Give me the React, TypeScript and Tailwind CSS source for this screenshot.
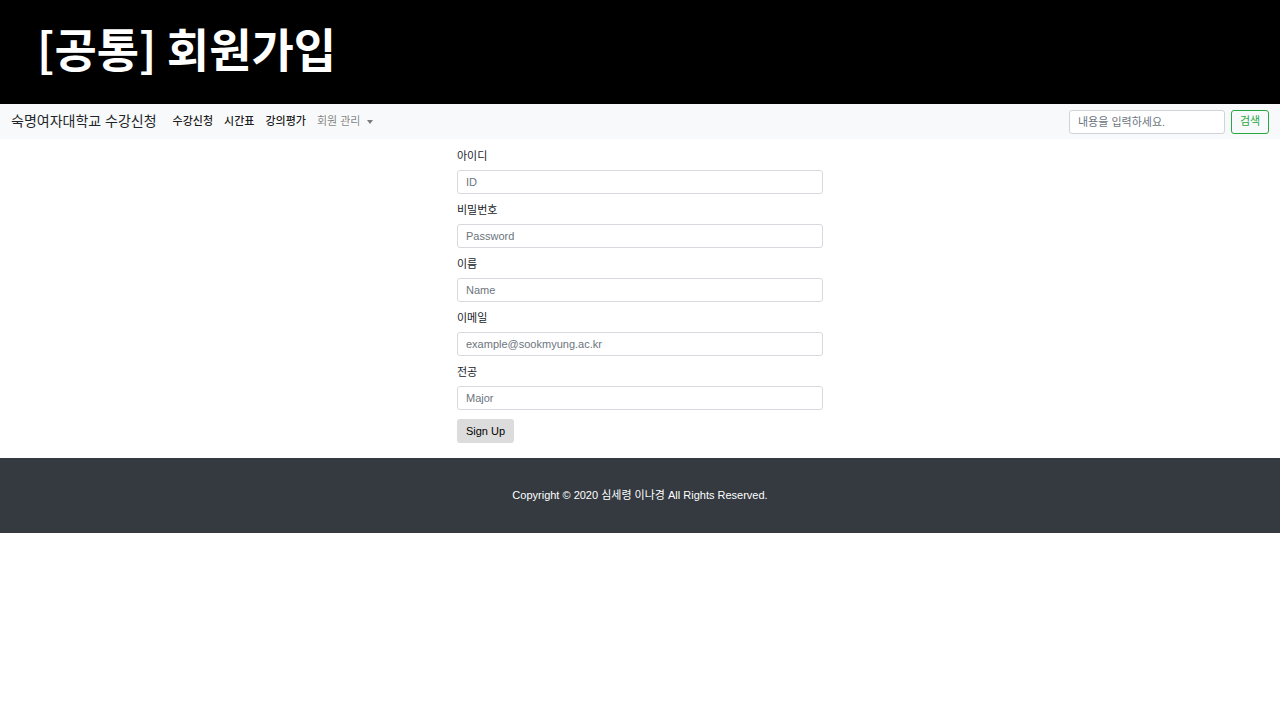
import React from "react";

const fields = [
  { label: "아이디", placeholder: "ID" },
  { label: "비밀번호", placeholder: "Password" },
  { label: "이름", placeholder: "Name" },
  { label: "이메일", placeholder: "example@sookmyung.ac.kr" },
  { label: "전공", placeholder: "Major" },
];

const font = "font-['Liberation_Sans','Noto_Sans_CJK_KR',sans-serif]";

export default function App() {
  return (
    <div className={`w-[1280px] h-[720px] bg-white ${font}`}>
      {/* Title banner */}
      <div className="h-[104px] bg-black flex items-center pl-[37px]">
        <h1 className="text-white text-[46px] font-bold leading-none font-['Noto_Sans_CJK_KR',sans-serif] -mt-[10px]">
          [공통] 회원가입
        </h1>
      </div>

      {/* Navbar */}
      <nav className="h-[35px] bg-[#f8f9fa] flex items-center px-[11px]">
        <span className="text-[14px] text-[#212529] mr-[16px]">숙명여자대학교 수강신청</span>
        <div className="flex items-center gap-[11px] text-[11px] font-medium">
          <span className="text-black/90">수강신청</span>
          <span className="text-black/90">시간표</span>
          <span className="text-black/90">강의평가</span>
          <span className="text-black/50 flex items-center gap-[7px] font-normal">
            회원 관리
            <span className="inline-block w-0 h-0 border-l-[3px] border-r-[3px] border-t-[4px] border-l-transparent border-r-transparent border-t-black/50" />
          </span>
        </div>
        <div className="ml-auto flex items-center gap-[6px]">
          <input
            className="w-[156px] h-[24px] rounded-[3px] border border-[#ced4da] px-[8px] text-[11px] bg-white placeholder:text-[#6c757d]"
            placeholder="내용을 입력하세요."
          />
          <button className="h-[24px] w-[38px] rounded-[3px] border border-[#28a745] text-[#28a745] text-[11px]">
            검색
          </button>
        </div>
      </nav>

      {/* Form */}
      <div className="w-[366px] mx-auto pt-[9px]">
        {fields.map((f) => (
          <div key={f.label} className="mb-[8px]">
            <label className="block text-[11px] leading-[16px] text-[#212529] mb-[6px]">{f.label}</label>
            <input
              className="block w-full h-[24px] rounded-[3px] border border-[#d6dadf] px-[8px] text-[11px] placeholder:text-[#6c757d]"
              placeholder={f.placeholder}
            />
          </div>
        ))}
        <button className="h-[24px] w-[57px] rounded-[3px] bg-[#dcdcdc] text-[11px] text-black">
          Sign Up
        </button>
      </div>

      {/* Footer */}
      <footer className="mt-[15px] h-[75px] bg-[#343a40] flex items-center justify-center">
        <p className="text-white text-[11px] -mt-[2px]">Copyright © 2020 심세령 이나경 All Rights Reserved.</p>
      </footer>
    </div>
  );
}
